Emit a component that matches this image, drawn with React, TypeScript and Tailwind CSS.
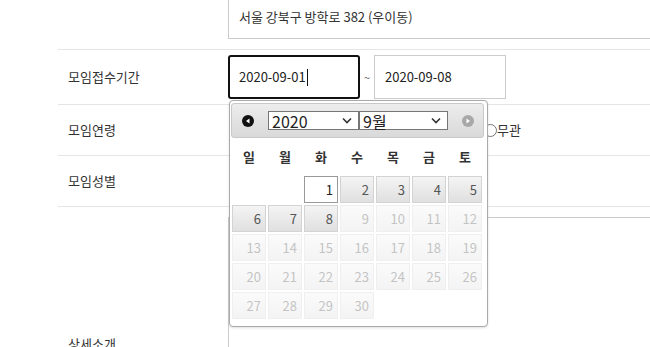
const font = { fontFamily: '"Noto Sans CJK KR", "Noto Sans", sans-serif' };

function Chevron() {
  return (
    <svg width="10" height="7" viewBox="0 0 10 7" className="shrink-0">
      <path d="M1 1.5 L5 5.5 L9 1.5" fill="none" stroke="#333" strokeWidth="1.6" />
    </svg>
  );
}

function FakeSelect({ value, width }: { value: string; width: string }) {
  return (
    <div className={`flex h-[19px] items-center justify-between border border-[#767676] bg-white pl-[3px] pr-[6px] ${width}`}>
      <span className="text-[16px] leading-none text-[#222]">{value}</span>
      <Chevron />
    </div>
  );
}

function DatePicker() {
  const days = ["일", "월", "화", "수", "목", "금", "토"];
  // 2020-09-01 is a Tuesday
  const cells: (number | null)[] = [null, null];
  for (let d = 1; d <= 30; d++) cells.push(d);

  return (
    <div className="absolute left-[229px] top-[100px] z-10 h-[227px] w-[259px] rounded-[4px] border border-[#aaa] bg-white pl-[1px] pt-[2px] shadow-sm">
      <div className="flex h-[35px] w-[253px] items-center rounded-[3px] border border-[#c8c8c8] bg-gradient-to-b from-[#ededed] to-[#d9d9d9]">
        <div className="ml-[10px] flex h-[12px] w-[12px] items-center justify-center rounded-full bg-[#111]">
          <svg width="6" height="6" viewBox="0 0 6 6">
            <path d="M1 3 L4.5 0.5 L4.5 5.5 Z" fill="#fff" />
          </svg>
        </div>
        <div className="ml-[14px] flex">
          <FakeSelect value="2020" width="w-[91px]" />
          <FakeSelect value="9월" width="w-[89px]" />
        </div>
        <div className="ml-[14px] flex h-[12px] w-[12px] items-center justify-center rounded-full bg-[#a8a8a8]">
          <svg width="6" height="6" viewBox="0 0 6 6">
            <path d="M5 3 L1.5 0.5 L1.5 5.5 Z" fill="#fff" />
          </svg>
        </div>
      </div>

      <div className="ml-[1px] grid h-[38px] grid-cols-[repeat(7,34px)] items-center gap-x-[2px]">
        {days.map((d) => (
          <div key={d} className="text-center text-[13px] font-bold text-[#333]">
            {d}
          </div>
        ))}
      </div>

      <div className="ml-[1px] grid grid-cols-[repeat(7,34px)] auto-rows-[27px] gap-[2px]">
        {cells.map((d, i) => {
          if (d === null) return <div key={i} />;
          if (d === 1)
            return (
              <div key={i} className="flex items-center justify-end border border-[#999] bg-white pr-[4px] text-[13px] text-[#212121]">
                {d}
              </div>
            );
          const disabled = d > 8;
          return (
            <div
              key={i}
              className={`flex items-center justify-end border border-[#d3d3d3] bg-gradient-to-b from-[#f4f4f4] to-[#e0e0e0] pr-[4px] text-[13px] text-[#555] ${disabled ? "opacity-35" : ""}`}
            >
              {d}
            </div>
          );
        })}
      </div>
    </div>
  );
}

function Label({ children }: { children: React.ReactNode }) {
  return <div className="w-[170px] shrink-0 pl-[10px] text-[13px] text-[#333]">{children}</div>;
}

export default function App() {
  return (
    <div className="relative h-[347px] w-[650px] overflow-hidden bg-white" style={font}>
      <div className="ml-[58px] w-[700px]">
        <div className="flex pb-[10px]">
          <div className="w-[170px] shrink-0" />
          <div className="-mt-[5px] flex h-[44px] w-[440px] items-center border border-[#ccc] pl-[10px] text-[13px] text-[#333]">
            서울 강북구 방학로 382 (우이동)
          </div>
        </div>

        <div className="flex items-center border-t border-[#e5e5e5] py-[5px]">
          <Label>모임접수기간</Label>
          <div className="flex h-[44px] w-[132px] items-center rounded-[3px] border-2 border-[#111] pl-[9px] text-[13px] text-[#222]">
            2020-09-01
            <span className="ml-[1px] h-[17px] w-px bg-[#111]" />
          </div>
          <span className="w-[14px] text-center text-[11px] text-[#666]">~</span>
          <div className="flex h-[44px] w-[132px] items-center border border-[#ccc] pl-[10px] text-[13px] text-[#222]">
            2020-09-08
          </div>
        </div>

        <div className="flex h-[51px] items-center border-t border-[#e5e5e5]">
          <Label>모임연령</Label>
          <div className="flex items-center pl-[256px] text-[13px] text-[#333]">
            <span className="h-[13px] w-[13px] rounded-full border border-[#767676]" />
            <span>무관</span>
          </div>
        </div>

        <div className="flex h-[51px] items-center border-t border-[#e5e5e5]">
          <Label>모임성별</Label>
        </div>

        <div className="flex items-center border-t border-[#e5e5e5] py-[10px]">
          <Label>상세소개</Label>
          <div className="h-[254px] w-[440px] border border-[#ccc]" />
        </div>
      </div>

      <DatePicker />
    </div>
  );
}
